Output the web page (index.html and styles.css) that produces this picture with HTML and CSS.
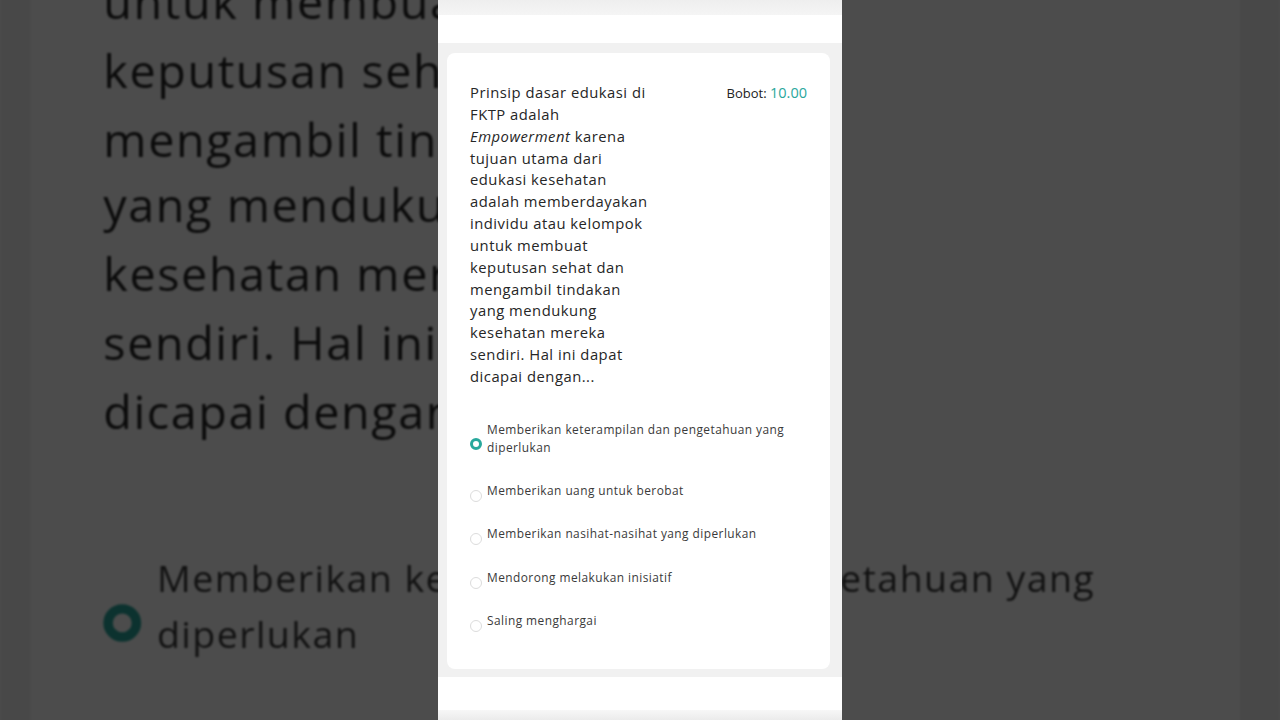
FILE: index.html
```html
<!DOCTYPE html>
<html lang="id">
<head>
<meta charset="utf-8">
<title>Soal</title>
<link rel="stylesheet" href="styles.css">
</head>
<body>
<div class="stage">
  <div class="backdrop" aria-hidden="true">
    <div class="phone phone-blur">
      <div class="topbar"></div>
      <div class="header"></div>
      <div class="content">
        <div class="card">
          <div class="card-head">
            <p class="question">Prinsip dasar edukasi di<br>FKTP adalah<br><em>Empowerment</em> karena<br>tujuan utama dari<br>edukasi kesehatan<br>adalah memberdayakan<br>individu atau kelompok<br>untuk membuat<br>keputusan sehat dan<br>mengambil tindakan<br>yang mendukung<br>kesehatan mereka<br>sendiri. Hal ini dapat<br>dicapai dengan...</p>
            <div class="weight"><span class="weight-label">Bobot:</span> <span class="weight-value">10.00</span></div>
          </div>
          <ul class="options">
            <li class="option"><span class="radio radio-on"></span><span class="label">Memberikan keterampilan dan pengetahuan yang<br>diperlukan</span></li>
            <li class="option"><span class="radio"></span><span class="label">Memberikan uang untuk berobat</span></li>
            <li class="option"><span class="radio"></span><span class="label">Memberikan nasihat-nasihat yang diperlukan</span></li>
            <li class="option"><span class="radio"></span><span class="label">Mendorong melakukan inisiatif</span></li>
            <li class="option"><span class="radio"></span><span class="label">Saling menghargai</span></li>
          </ul>
        </div>
      </div>
      <div class="footer"></div>
      <div class="bottom"></div>
    </div>
  </div>

  <div class="phone phone-main">
    <div class="topbar"></div>
    <div class="header"></div>
    <div class="content">
      <div class="card">
        <div class="card-head">
          <p class="question">Prinsip dasar edukasi di<br>FKTP adalah<br><em>Empowerment</em> karena<br>tujuan utama dari<br>edukasi kesehatan<br>adalah memberdayakan<br>individu atau kelompok<br>untuk membuat<br>keputusan sehat dan<br>mengambil tindakan<br>yang mendukung<br>kesehatan mereka<br>sendiri. Hal ini dapat<br>dicapai dengan...</p>
          <div class="weight"><span class="weight-label">Bobot:</span> <span class="weight-value">10.00</span></div>
        </div>
        <ul class="options">
          <li class="option"><span class="radio radio-on"></span><span class="label">Memberikan keterampilan dan pengetahuan yang<br>diperlukan</span></li>
          <li class="option"><span class="radio"></span><span class="label">Memberikan uang untuk berobat</span></li>
          <li class="option"><span class="radio"></span><span class="label">Memberikan nasihat-nasihat yang diperlukan</span></li>
          <li class="option"><span class="radio"></span><span class="label">Mendorong melakukan inisiatif</span></li>
          <li class="option"><span class="radio"></span><span class="label">Saling menghargai</span></li>
        </ul>
      </div>
    </div>
    <div class="footer"></div>
    <div class="bottom"></div>
  </div>
</div>
</body>
</html>
```

FILE: styles.css
```css
* { box-sizing: border-box; }

html, body {
  margin: 0;
  padding: 0;
  background: #4a4a4a;
}

body {
  font-family: "Open Sans", "Noto Sans", sans-serif;
}

.stage {
  position: relative;
  width: 1280px;
  height: 720px;
  overflow: hidden;
  display: flex;
  justify-content: center;
}

.backdrop {
  position: absolute;
  inset: 0;
  display: flex;
  justify-content: center;
  align-items: center;
  overflow: hidden;
}

.phone {
  width: 404px;
  height: 720px;
  background: #f1f1f1;
  display: flex;
  flex-direction: column;
  flex-shrink: 0;
}

.phone-blur {
  transform: scale(3.157, 3.13);
  transform-origin: 50% 50%;
  filter: brightness(0.3) blur(0.35px);
}

.phone-main {
  position: relative;
  z-index: 1;
}

.topbar {
  height: 15px;
  background: linear-gradient(#eeeeee, #f5f5f5);
}

.header {
  height: 28px;
  background: #ffffff;
}

.content {
  padding: 10px 12px 8px 9px;
  background: #f1f1f1;
}

.card {
  background: #ffffff;
  border-radius: 8px;
  height: 616px;
  padding: 29px 23px 0 23px;
}

.card-head {
  display: flex;
  justify-content: space-between;
  align-items: flex-start;
}

.question {
  margin: 0;
  font-size: 14.8px;
  line-height: 21.85px;
  color: #262626;
  letter-spacing: 0.5px;
}

.question em {
  font-style: italic;
}

.weight {
  font-size: 13px;
  line-height: 21.8px;
  white-space: nowrap;
}

.weight-label {
  color: #222222;
  font-weight: 500;
}

.weight-value {
  color: #2aa79c;
  font-size: 14.5px;
  font-weight: 500;
}

.options {
  list-style: none;
  margin: 32px 0 0 0;
  padding: 0;
  display: flex;
  flex-direction: column;
  gap: 25.3px;
}

.option {
  display: flex;
  align-items: center;
  gap: 5px;
}

.radio {
  width: 12px;
  height: 12px;
  border-radius: 50%;
  border: 1px solid #dcdcdc;
  background: #ffffff;
  transform: translateY(6px);
  flex-shrink: 0;
}

.radio-on {
  border: 3px solid #28a89c;
}

.label {
  font-size: 11.9px;
  line-height: 18px;
  color: #3a3a3a;
  font-weight: 500;
  letter-spacing: 0.45px;
}

.footer {
  height: 33px;
  background: #ffffff;
}

.bottom {
  flex: 1;
  background: linear-gradient(#f7f7f7, #ebebeb);
}
```
